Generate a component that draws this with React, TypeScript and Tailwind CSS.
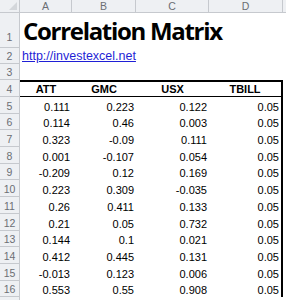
import React from 'react';

const rows: [string, string, string, string][] = [
  ['0.111', '0.223', '0.122', '0.05'],
  ['0.114', '0.46', '0.003', '0.05'],
  ['0.323', '-0.09', '0.111', '0.05'],
  ['0.001', '-0.107', '0.054', '0.05'],
  ['-0.209', '0.12', '0.169', '0.05'],
  ['0.223', '0.309', '-0.035', '0.05'],
  ['0.26', '0.411', '0.133', '0.05'],
  ['0.21', '0.05', '0.732', '0.05'],
  ['0.144', '0.1', '0.021', '0.05'],
  ['0.412', '0.445', '0.131', '0.05'],
  ['-0.013', '0.123', '0.006', '0.05'],
  ['0.553', '0.55', '0.908', '0.05'],
];

const RowHead: React.FC<{ n?: number; className?: string }> = ({ n, className = '' }) => (
  <div
    className={`w-[20px] shrink-0 flex items-end justify-center border-r border-b border-[#c6c9ce] bg-[#eef0f3] text-[10.5px] leading-[14px] text-[#6b6e73] ${className}`}
  >
    {n}
  </div>
);

const Cols = ['w-[52px]', 'w-[64px]', 'w-[73px]', 'w-[74px]'];

export default function App() {
  return (
    <div className="w-[286px] h-[300px] overflow-hidden bg-white font-['Liberation_Sans',Arial,sans-serif] text-black">
      {/* column letters */}
      <div className="flex h-[13px]">
        <div className="relative w-[20px] shrink-0 border-r border-b border-[#c6c9ce] bg-[#eef0f3]">
          <div className="absolute right-[2px] bottom-[2px] w-0 h-0 border-l-[8px] border-l-transparent border-b-[8px] border-b-[#d4d7db]" />
        </div>
        {['A', 'B', 'C', 'D'].map((c, i) => (
          <div
            key={c}
            className={`${Cols[i]} shrink-0 flex items-center justify-center border-r border-b border-[#c6c9ce] bg-[#eef0f3] text-[10.5px] leading-none text-[#6b6e73]`}
          >
            {c}
          </div>
        ))}
        <div className="flex-1 border-b border-[#c6c9ce] bg-[#eef0f3]" />
      </div>

      {/* row 1 */}
      <div className="flex h-[35px]">
        <RowHead n={1} className="pb-[3px]" />
        <div className="flex items-end pl-[3px] pb-[2px] text-[24px] leading-[30px] font-bold tracking-[-1.3px] whitespace-nowrap font-['Open_Sans',sans-serif]">
          Correlation Matrix
        </div>
      </div>

      {/* row 2 */}
      <div className="flex h-[16px]">
        <RowHead n={2} />
        <div className="flex items-end pl-[2px] text-[12.5px] leading-[15px] text-[#1f1fd6] underline whitespace-nowrap">
          http://investexcel.net
        </div>
      </div>

      {/* row 3 */}
      <div className="flex h-[16px]">
        <RowHead n={3} />
      </div>

      {/* row 4 */}
      <div className="flex h-[17px]">
        <RowHead n={4} />
        {['ATT', 'GMC', 'USX', 'TBILL'].map((h, i) => (
          <div
            key={h}
            className={`${Cols[i]} shrink-0 flex items-end justify-center border-t-2 border-b border-black text-[11px] leading-[14px] font-bold ${i === 3 ? 'border-r-2' : ''}`}
          >
            {h}
          </div>
        ))}
      </div>

      {rows.map((r, ri) => (
        <div key={ri} className="flex h-[16.7px]">
          <RowHead n={ri + 5} />
          {r.map((v, i) => (
            <div
              key={i}
              className={`${Cols[i]} shrink-0 flex items-end justify-end text-[11px] leading-[14px] ${i === 3 ? 'border-r-2 border-black pr-[2px]' : 'pr-[2px]'}`}
            >
              {v}
            </div>
          ))}
        </div>
      ))}
      <div className="flex h-[10px]">
        <RowHead />
      </div>
    </div>
  );
}
